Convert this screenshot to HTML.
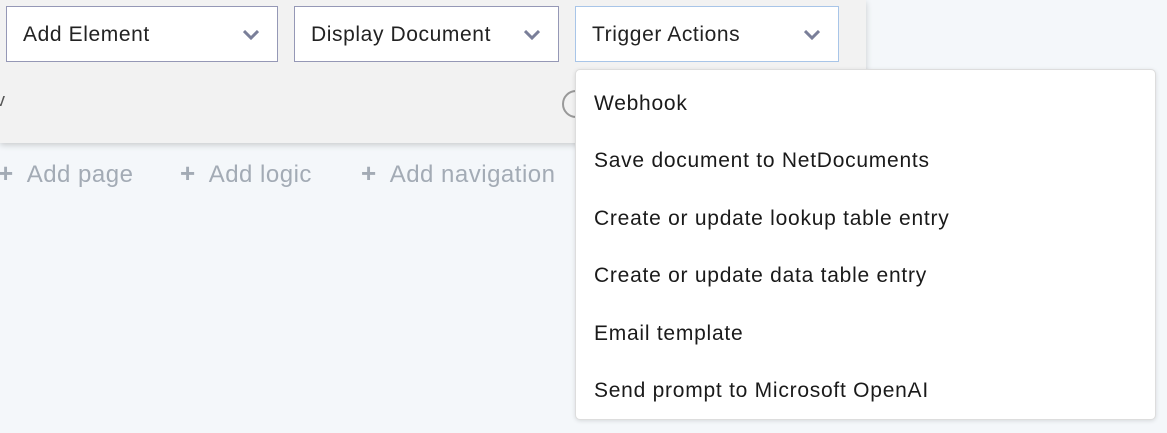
<!DOCTYPE html>
<html><head><style>
body{margin:0;width:1167px;height:433px;background:#f4f7fa;font-family:"Liberation Sans",sans-serif;position:relative;overflow:hidden}
.panel{position:absolute;left:0;top:0;width:866px;height:143px;background:#f2f2f2;box-shadow:0 2px 6px rgba(0,0,0,.18)}
.sel{position:absolute;top:6px;height:56px;background:#fff;border:1px solid #9598b6;box-sizing:border-box;font-size:21px;letter-spacing:0.6px;color:#222;line-height:56px;padding-left:16px}
.sel svg{position:absolute;right:18px;top:23px}
.add{position:absolute;top:158px;font-size:24px;letter-spacing:0.5px;color:#a3abb5}
.add b{font-weight:bold;margin-right:13px;font-size:26px}
.dd{position:absolute;left:575px;top:69px;width:581px;height:351px;background:#fff;border:1px solid #ddd;border-radius:5px;box-sizing:border-box;box-shadow:0 1px 4px rgba(0,0,0,.12)}
.dd div{position:absolute;left:18px;font-size:21px;letter-spacing:0.75px;color:#1a1a1a}
</style></head><body>
<div class="panel">
<div class="sel" style="left:6px;width:272px">Add Element<svg width="16" height="10"><path d="M1 1l7 7 7-7" stroke="#7a7f99" stroke-width="3" fill="none"/></svg></div>
<div class="sel" style="left:294px;width:265px">Display Document<svg width="16" height="10"><path d="M1 1l7 7 7-7" stroke="#7a7f99" stroke-width="3" fill="none"/></svg></div>
<div class="sel" style="left:575px;width:264px;border-color:#a8c5e8">Trigger Actions<svg width="16" height="10"><path d="M1 1l7 7 7-7" stroke="#7a7f99" stroke-width="3" fill="none"/></svg></div>
<div style="position:absolute;left:-4px;top:90px;font-size:18px;color:#555">v</div>
<div style="position:absolute;left:562px;top:90px;width:24px;height:24px;border:2px solid #999;border-radius:50%"></div>
</div>
<div class="add" style="left:-2px"><b>+</b>Add page</div>
<div class="add" style="left:180px"><b>+</b>Add logic</div>
<div class="add" style="left:361px"><b>+</b>Add navigation</div>
<div class="dd">
<div style="top:22px">Webhook</div>
<div style="top:79px">Save document to NetDocuments</div>
<div style="top:137px">Create or update lookup table entry</div>
<div style="top:194px">Create or update data table entry</div>
<div style="top:252px">Email template</div>
<div style="top:309px">Send prompt to Microsoft OpenAI</div>
</div>
</body></html>
